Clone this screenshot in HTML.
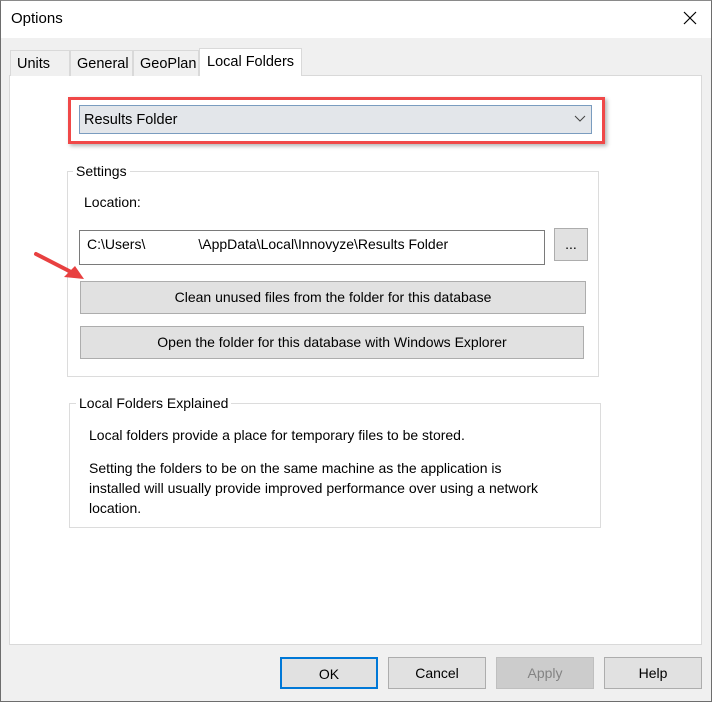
<!DOCTYPE html>
<html><head><style>
*{box-sizing:border-box;margin:0;padding:0}
body{width:712px;height:702px;overflow:hidden;font-family:"Liberation Sans",sans-serif;font-size:14px;color:#000;position:relative;background:#f0f0f0}
.a{position:absolute}
.win{left:0;top:0;width:712px;height:702px;border:1px solid #6d6d6d;border-top-color:#8a8a8a}
.btn{position:absolute;background:#e1e1e1;border:1px solid #adadad;text-align:center;font-size:14px}
.tab{position:absolute;background:#f0f0f0;border:1px solid #d9d9d9;border-bottom:none;top:50px;height:26px;padding-left:6px;line-height:27px;font-size:14.5px}
.grp{position:absolute;border:1px solid #dcdcdc}
.gl{position:absolute;background:#fff;padding:0 3px;top:-10px;line-height:18px}
</style></head><body>
<div class="a" style="left:0;top:0;width:712px;height:38px;background:#fff"></div>
<div class="a" style="left:11px;top:10px;font-size:15px">Options</div>
<svg class="a" style="left:683px;top:11px" width="14" height="14"><path d="M1 1L13 13M13 1L1 13" stroke="#000" stroke-width="1.2"/></svg>
<div class="a" style="left:9px;top:75px;width:693px;height:570px;background:#fff;border:1px solid #d9d9d9"></div>
<div class="tab" style="left:10px;width:60px">Units</div>
<div class="tab" style="left:70px;width:63px">General</div>
<div class="tab" style="left:133px;width:66px">GeoPlan</div>
<div class="tab" style="left:199px;top:48px;height:28px;width:103px;background:#fff;line-height:27px;padding-left:7px">Local Folders</div>
<div class="a" style="left:68px;top:97px;width:537px;height:47px;border:3px solid #f04848;box-shadow:2px 2px 4px rgba(0,0,0,.3)"></div>
<div class="a" style="left:79px;top:105px;width:513px;height:29px;background:#e3e6ea;border:1px solid #7a9cbf;padding-left:4px;line-height:28px;font-size:14.5px">Results Folder</div>
<svg class="a" style="left:574px;top:115px" width="12" height="8"><path d="M1 1L6 6L11 1" stroke="#444" fill="none"/></svg>
<div class="grp" style="left:67px;top:171px;width:532px;height:206px"><div class="gl" style="left:5px">Settings</div></div>
<div class="a" style="left:84px;top:194px">Location:</div>
<div class="a" style="left:79px;top:230px;width:466px;height:35px;border:1px solid #7a7a7a;background:#fff;padding-left:7px;line-height:26px">C:\Users\<span style="display:inline-block;width:53px"></span>\AppData\Local\Innovyze\Results Folder</div>
<div class="btn" style="left:554px;top:228px;width:34px;height:33px;line-height:30px">...</div>
<div class="btn" style="left:80px;top:281px;width:506px;height:33px;line-height:31px">Clean unused files from the folder for this database</div>
<div class="btn" style="left:80px;top:326px;width:504px;height:33px;line-height:31px">Open the folder for this database with Windows Explorer</div>
<div class="grp" style="left:69px;top:403px;width:532px;height:125px"><div class="gl" style="left:6px">Local Folders Explained</div></div>
<div class="a" style="left:89px;top:425px;line-height:20px">Local folders provide a place for temporary files to be stored.</div>
<div class="a" style="left:89px;top:458px;line-height:20px;width:500px;white-space:nowrap">Setting the folders to be on the same machine as the application is<br>installed will usually provide improved performance over using a network<br>location.</div>
<svg class="a" style="left:28px;top:246px" width="62" height="42"><path d="M8 8L45 27" stroke="#e84040" stroke-width="4" stroke-linecap="round"/><path d="M56 33L36 31L47 20Z" fill="#e84040"/></svg>
<div class="btn" style="left:280px;top:657px;width:98px;height:32px;line-height:30px;border:2px solid #0078d7">OK</div>
<div class="btn" style="left:388px;top:657px;width:98px;height:32px;line-height:30px">Cancel</div>
<div class="btn" style="left:496px;top:657px;width:98px;height:32px;line-height:30px;background:#cccccc;border-color:#bfbfbf;color:#838383">Apply</div>
<div class="btn" style="left:604px;top:657px;width:98px;height:32px;line-height:30px">Help</div>
<div class="a win"></div>
</body></html>
